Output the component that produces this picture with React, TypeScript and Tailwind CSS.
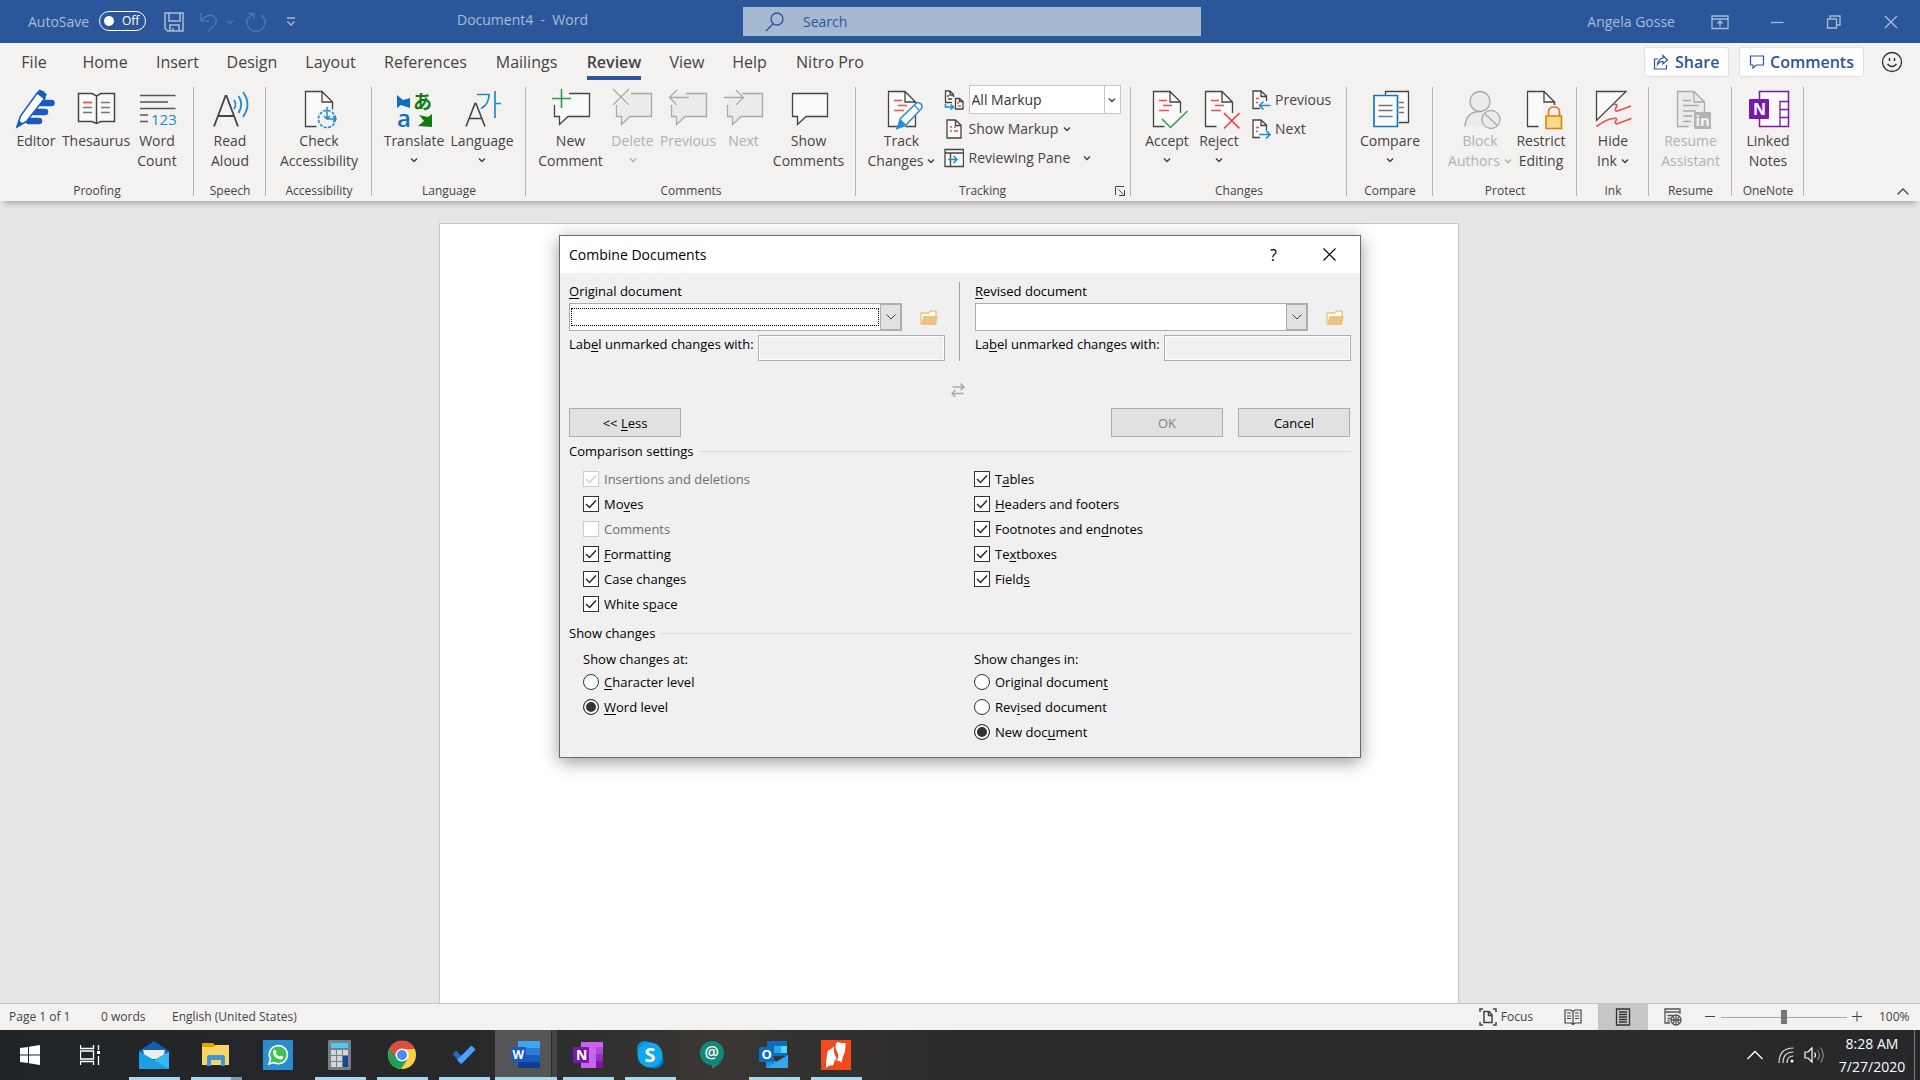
import { useState } from "react";
import type { ReactNode } from "react";

const DARK = "#444444";
const GRAY = "#a9a9a9";
const BLUE = "#1e8bcd";
const RED = "#f04e4e";

function Chevron({ className = "" }: { className?: string }) {
  return (
    <svg className={`h-[6px] w-[8px] shrink-0 ${className}`} viewBox="0 0 8 6" fill="none" stroke="currentColor" strokeWidth={1.5}>
      <path d="M1 1.5 4 4.5 7 1.5" />
    </svg>
  );
}

function Glyph({ children }: { children: ReactNode }) {
  return (
    <svg className="h-10 w-10 shrink-0 overflow-visible" viewBox="0 0 40 40" fill="none" strokeWidth={1.3}>
      {children}
    </svg>
  );
}

function Sheet({ stroke = DARK, fill = "#fafafa" }: { stroke?: string; fill?: string }) {
  return (
    <>
      <path d="M6.5 3.5H23L33.5 14v24.5h-27z" fill={fill} />
      <path d="M33.5 25V14L23 3.5H6.5v35h11M23 3.5V14h10.5" stroke={stroke} />
    </>
  );
}

const RedLines = () => <path d="M12 12.5h8M16 17.5h9M12 22.5h10" stroke={RED} strokeWidth={1.6} />;

function Bubble({ stroke = DARK, fill = "#fafafa", notch = false }: { stroke?: string; fill?: string; notch?: boolean }) {
  return (
    <>
      <path d="M3.5 5.5h35v23H17l-8.500 8v-8h-5z" fill={fill} />
      <path
        d={notch ? "M18 5.5h20.5v23H17l-8.500 8v-8h-5V17" : "M3.5 5.5h35v23H17l-8.500 8v-8h-5z"}
        stroke={stroke}
      />
    </>
  );
}

const EditorIcon = () => (
  <Glyph>
    <path d="M22 15h13.500M18 24h11M13 33h10" stroke="#185abd" strokeWidth={6.500} strokeLinecap="round" />
    <path d="M1 39 4.500 28 21.500 4.500l7.500 5.500L10.500 33.500z" fill="#fff" stroke="#185abd" strokeWidth={1.6} />
    <path d="m20.500 5.500 3-4q4 1 7.500 5l-3 4.500z" fill="#185abd" />
    <path d="m.5 39.500 2.500-7.500 4 4z" fill="#185abd" />
  </Glyph>
);

const ThesaurusIcon = () => (
  <Glyph>
    <path d="M2.500 5.500H16l4.500 2.500L25 5.500h13.500v28H25l-4.500 2-4.500-2H2.500z" fill="#fafafa" stroke={DARK} strokeWidth={1.500} />
    <path d="M20.500 8v27" stroke={DARK} strokeWidth={1.500} />
    <path d="M7 14.500h9" stroke={RED} strokeWidth={1.800} />
    <path d="M7 19.500h9M7 24.500h9M25 14.500h9M25 19.500h9M25 24.500h9" stroke="#777" />
  </Glyph>
);

const WordCountIcon = () => (
  <Glyph>
    <path d="M3 7.500h35.500M3 14h28M3 20.500h35.500M3 27h8M3 33.500h8" stroke="#555" strokeWidth={1.500} />
    <text x="14" y="36.500" fontSize="15" fill={BLUE}>123</text>
  </Glyph>
);

const ReadAloudIcon = () => (
  <Glyph>
    <path d="M4 38.500 15.500 8h1L28 38.500M8 28h16" stroke={DARK} strokeWidth={1.800} />
    <path d="M24 12q3 4.500 0 9M28.500 8q5.500 8 0 17M33 4q9 12 0 25" stroke={BLUE} strokeWidth={1.800} />
  </Glyph>
);

const CheckIcon = () => (
  <Glyph>
    <Sheet />
    <circle cx="28" cy="31" r="11" fill="#f3f2f1" />
    <path d="M28 19v12h9m-3-3 3 3-3 3M25 28l3 3 3-3" stroke={BLUE} strokeWidth={1.500} />
    <circle cx="28" cy="31" r="8.500" stroke={BLUE} strokeWidth={1.600} strokeDasharray="3 1.500" />
  </Glyph>
);

const TranslateIcon = () => (
  <Glyph>
    <path d="M3 7v13l4-3 9 3V10l-7 2z" fill="#106ebe" />
    <path d="M38 26v13l-14-1 6-5-5-6 9 2z" fill="#107c10" />
    <text x="3" y="39" fontSize="24" fontWeight="600" fill="#106ebe">a</text>
    <text x="19" y="21" fontSize="19" fontWeight="700" fill="#107c10" fontFamily="'Noto Sans CJK JP', sans-serif">あ</text>
  </Glyph>
);

const LanguageIcon = () => (
  <Glyph>
    <path d="M4 38.500 13 15.500h1l9 23M7.500 30.500h12" stroke={DARK} strokeWidth={1.600} />
    <path d="M15 6.500h12q0 10-8 14M33 3v27M33 15.500h6" stroke={BLUE} strokeWidth={1.700} />
  </Glyph>
);

const NewCommentIcon = () => (
  <Glyph>
    <Bubble notch />
    <path d="M10.500 1v19M1 10.500h19" stroke="#f3f2f1" strokeWidth={5} />
    <path d="M10.500 1v19M1 10.500h19" stroke="#2e9e4f" strokeWidth={1.600} />
  </Glyph>
);

const DeleteIcon = () => (
  <Glyph>
    <Bubble notch stroke={GRAY} fill="#ebebeb" />
    <path d="m0 1 16 16M16 1 0 17" stroke="#f3f2f1" strokeWidth={4} />
    <path d="m0 1 16 16M16 1 0 17" stroke={GRAY} />
  </Glyph>
);

const PreviousIcon = () => (
  <Glyph>
    <Bubble notch stroke={GRAY} fill="#ebebeb" />
    <path d="M9 2 1.500 9.500 9 17M2 9.500h19" stroke="#f3f2f1" strokeWidth={4} />
    <path d="M9 2 1.500 9.500 9 17M2 9.500h19" stroke={GRAY} />
  </Glyph>
);

const NextIcon = () => (
  <Glyph>
    <Bubble notch stroke={GRAY} fill="#ebebeb" />
    <path d="m12 2 7.500 7.500L12 17M19 9.500H0" stroke="#f3f2f1" strokeWidth={4} />
    <path d="m12 2 7.500 7.500L12 17M19 9.500H0" stroke={GRAY} />
  </Glyph>
);

const ShowCommentsIcon = () => (
  <Glyph>
    <Bubble />
  </Glyph>
);

const TrackChangesIcon = () => (
  <Glyph>
    <Sheet />
    <RedLines />
    <path d="M33.500 26v12.500h-10" stroke={DARK} />
    <path d="m15.500 40 3-9.500L35 14.500q5.500 0 5 5.500L23.500 37.500z" fill="#fff" stroke="#2b8fd6" strokeWidth={1.500} />
    <path d="m15 40.500 3.500-8.500 5 5zM32.500 17.500l4.500 4.500" fill="#2b8fd6" stroke="#2b8fd6" />
  </Glyph>
);

const AcceptIcon = () => (
  <Glyph>
    <Sheet />
    <RedLines />
    <path d="m15 31 8.500 8.500L40.500 23" stroke="#f3f2f1" strokeWidth={5} />
    <path d="m15 31 8.500 8.500L40.500 23" stroke="#2e9e4f" strokeWidth={1.500} />
  </Glyph>
);

const RejectIcon = () => (
  <Glyph>
    <Sheet />
    <RedLines />
    <path d="m25 25 15.500 15.500m0-15.500L25 40.500" stroke="#f3f2f1" strokeWidth={5} />
    <path d="m25 25 15.500 15.500m0-15.500L25 40.500" stroke="#f03a3a" strokeWidth={1.500} />
  </Glyph>
);

const CompareIcon = () => (
  <Glyph>
    <path d="M15.500 7V3.500h23v31H29" fill="#fafafa" stroke={DARK} />
    <path d="M29 14.500h5M29 19.500h5M29 24.500h5" stroke="#777" />
    <path d="M4 7.500h23.500v31H4z" fill="#fafafa" stroke="#1a74c4" strokeWidth={1.700} />
    <path d="M8.500 17.500h14M8.500 22.500h14M8.500 28.500h14" stroke="#777" />
  </Glyph>
);

const BlockIcon = () => (
  <Glyph>
    <path d="M5 38.500q1-15 15-15 7 0 10 5v10z" fill="#ebebeb" />
    <path d="M5 38.500q1-15 15-15" stroke={GRAY} />
    <circle cx="20" cy="13.500" r="10" fill="#ebebeb" stroke={GRAY} />
    <circle cx="31" cy="31.500" r="9" fill="#ebebeb" stroke={GRAY} />
    <path d="m24.500 25.500 13 12" stroke={GRAY} />
  </Glyph>
);

const RestrictIcon = () => (
  <Glyph>
    <Sheet />
    <path d="M22 17h20v25H22z" fill="#f3f2f1" />
    <path d="M33.500 17v-3" stroke={DARK} />
    <path d="M27.500 28v-4q0-5 5.500-5t5.500 5v4" stroke="#e07b10" strokeWidth={1.700} />
    <path d="M25 28h15.500v12.500H25z" fill="#fbd98a" stroke="#e07b10" strokeWidth={1.500} />
  </Glyph>
);

const HideInkIcon = () => (
  <Glyph>
    <path d="M3.500 3.500H33l-29.500 29z" fill="#fafafa" stroke={DARK} />
    <path d="M20 16.500q6-1 3 3-2 5 3 3l12-4.500M3.500 38.500q11-8 17-8 5-1 2 3-1 4 5 1l11-4" stroke={RED} strokeWidth={1.700} />
  </Glyph>
);

const ResumeIcon = () => (
  <Glyph>
    <Sheet stroke={GRAY} fill="#ebebeb" />
    <path d="M12 12.500h8M12 17.500h16M12 23h13M12 28h9M12 33.500h8" stroke={GRAY} />
    <rect x="23" y="24" width="17" height="17" rx="1" fill="#b3b3b3" />
    <text x="24.500" y="38" fontSize="15" fontWeight="700" fill="#f3f2f1">in</text>
  </Glyph>
);

const LinkedNotesIcon = () => (
  <Glyph>
    <path d="M11.500 3.500h29v35h-29z" fill="#fafafa" stroke="#7719aa" strokeWidth={1.500} />
    <path d="M32 38.500v-25h8.500M32 21.500h8.500M32 29.500h8.500" stroke="#7719aa" />
    <rect x="1" y="11" width="20" height="20" rx="1" fill="#7719aa" />
    <text x="5" y="27" fontSize="16" fontWeight="700" fill="#fff">N</text>
  </Glyph>
);

type RibbonButtonProps = {
  icon: ReactNode;
  lines: string[];
  width: string;
  arrow?: "below" | "inline";
  disabled?: boolean;
};

function RibbonButton({ icon, lines, width, arrow, disabled }: RibbonButtonProps) {
  return (
    <button
      type="button"
      disabled={disabled}
      className={`flex shrink-0 flex-col items-center pt-[3px] text-[14px] leading-5 whitespace-nowrap ${width} ${
        disabled ? "text-[#b1b0af]" : "text-[#444444]"
      }`}
    >
      {icon}
      <span className="mt-[3px] flex flex-col items-center">
        {lines.map((line, i) => (
          <span key={line} className="flex items-center gap-1">
            {line}
            {arrow === "inline" && i === lines.length - 1 && <Chevron />}
          </span>
        ))}
        {arrow === "below" && <Chevron className="mt-[6px]" />}
      </span>
    </button>
  );
}

function Group({ label, width, children, launcher }: { label: string; width: string; children: ReactNode; launcher?: boolean }) {
  return (
    <section className={`relative flex shrink-0 flex-col ${width}`}>
      <div className="flex flex-1 items-start justify-center">{children}</div>
      <h2 className={`text-center text-[12px] leading-[10px] ${launcher ? "pr-[22px]" : ""}`}>{label}</h2>
      {launcher && (
        <button type="button" aria-label="Change tracking options" className="absolute right-[6px] bottom-0">
          <svg className="h-[10px] w-[10px]" viewBox="0 0 10 10" fill="none" stroke={DARK}>
            <path d="M.5 9V.5H9M3.500 3.500l5 5M9.500 4v5.500H4" />
          </svg>
        </button>
      )}
      <span className="absolute top-[2px] right-0 bottom-0 w-px bg-[#b5b3b1]" />
    </section>
  );
}

function SmallSheet({ kind }: { kind: "all" | "show" | "pane" | "prev" | "next" }) {
  return (
    <svg className="h-5 w-5 shrink-0" viewBox="0 0 20 20" fill="none" stroke={DARK} strokeWidth={1.300}>
      {kind === "all" && (
        <>
          <path d="M8 12.500H1.500V1H6l3.500 3.500V7M6 1v4h3.500" fill="#fafafa" />
          <path d="M11.500 8.500h4l3.500 3v7.500h-7.500zM15.500 8.500v3H19" fill="#fafafa" />
          <path d="M3 6h2M4 9h4" />
          <path d="M13 13h2M14 16h3" stroke={RED} />
          <path d="M1.500 14v3H9M6.500 14.500l3 2.500-3 2.500" stroke={BLUE} strokeWidth={1.600} />
        </>
      )}
      {kind === "show" && (
        <>
          <path d="M3 1h8.500L17 6v13H3zM11.500 1v5.500H17" fill="#fafafa" />
          <path d="M6 8h2M10 8h2M6 12h2M10 12h4" stroke={RED} strokeWidth={1.500} />
        </>
      )}
      {kind === "pane" && (
        <>
          <path d="M1 1.500h18.500v17H1zM1 5h18.500M6.500 5v13.500" fill="#fafafa" />
          <path d="M4 11.500h9M9.500 8l3.500 3.500L9.500 15" stroke={BLUE} strokeWidth={1.600} />
        </>
      )}
      {(kind === "prev" || kind === "next") && (
        <>
          <path d="M9 18.500H2V1h8l5.500 5v5M10 1v5.500h5.500" fill="#fafafa" />
          <path d="M5 8.500h3M5 12.500h2" stroke={RED} strokeWidth={1.500} />
          {kind === "prev" ? (
            <path d="M19.500 15.500H8.500m4-4-4 4 4 4" stroke={BLUE} strokeWidth={1.600} />
          ) : (
            <path d="M8 15.500h11m-4-4 4 4-4 4" stroke={BLUE} strokeWidth={1.600} />
          )}
        </>
      )}
    </svg>
  );
}

function TitleBar() {
  return (
    <header className="flex h-[43px] shrink-0 items-center bg-[#2b579a] text-[14px] text-[#a9bcd8]">
      <div className="flex w-[38.7%] shrink-0 items-center pl-7">
        <span className="w-[64px] pb-px whitespace-nowrap">AutoSave</span>
        <button
          type="button"
          role="switch"
          aria-checked="false"
          aria-label="AutoSave"
          className="mb-[2px] ml-[7px] flex h-5 w-[47px] items-center gap-2 rounded-full border border-white pl-1 text-[12px] text-white"
        >
          <span className="h-[10px] w-[10px] rounded-full bg-white" />
          Off
        </button>
        <button type="button" aria-label="Save" className="ml-[18px]">
          <svg className="h-5 w-5" viewBox="0 0 20 20" fill="none" stroke="currentColor" strokeWidth={1.500}>
            <path d="M1 1h18v18H3.500L1 16.500zM5 1v8h11V1M6 19v-6h9v6M9 19v-3" />
          </svg>
        </button>
        <button type="button" aria-label="Undo" className="ml-4 flex items-center gap-[6px] text-[#4d74b0]">
          <svg className="h-5 w-5" viewBox="0 0 20 20" fill="none" stroke="currentColor" strokeWidth={1.600}>
            <path d="M1 1v8h8M1.500 8.500Q8 1 14 4.500q5 5-1 10l-5 5" />
          </svg>
          <Chevron />
        </button>
        <button type="button" aria-label="Redo" className="ml-3 text-[#4d74b0]">
          <svg className="h-5 w-5" viewBox="0 0 20 20" fill="none" stroke="currentColor" strokeWidth={1.600}>
            <path d="M2 1.500h6v6M7.500 2Q1 5 1 10.500 2 19 10 19.500q8-.5 9-9Q19 6 15 3" />
          </svg>
        </button>
        <button type="button" aria-label="Customize Quick Access Toolbar" className="ml-5">
          <svg className="h-[10px] w-[10px]" viewBox="0 0 10 10" fill="none" stroke="currentColor" strokeWidth={1.300}>
            <path d="M1 1h8M1.500 4.500 5 8l3.500-3.500" />
          </svg>
        </button>
        <span className="ml-[161px] pb-1 whitespace-pre">Document4  -  Word</span>
      </div>
      <label className="flex h-[29px] w-[458px] shrink-0 items-center bg-[#a5b9d3] pl-[22px] text-[#2b579a]">
        <svg className="h-5 w-5" viewBox="0 0 20 20" fill="none" stroke="currentColor" strokeWidth={1.400}>
          <circle cx="12" cy="7" r="6" />
          <path d="M8 12 1 19" />
        </svg>
        <input
          type="search"
          aria-label="Search"
          placeholder="Search"
          className="ml-[18px] flex-1 bg-transparent outline-none placeholder:text-[#2b579a]"
        />
      </label>
      <div className="flex flex-1 items-center justify-end pr-5">
        <span className="mr-[36px]">Angela Gosse</span>
        <div className="flex items-center gap-[39px]">
          <button type="button" aria-label="Ribbon Display Options">
            <svg className="h-[18px] w-[18px]" viewBox="0 0 18 18" fill="none" stroke="currentColor" strokeWidth={1.300}>
              <path d="M1 3h16v12.500H1zM1 6h16M9 13.500V8M6.500 10.500 9 8l2.500 2.500" />
            </svg>
          </button>
          <button type="button" aria-label="Minimize">
            <svg className="h-[18px] w-[18px]" viewBox="0 0 18 18" stroke="currentColor" strokeWidth={1.300}>
              <path d="M3 9.500h12.500" />
            </svg>
          </button>
          <button type="button" aria-label="Restore Down">
            <svg className="h-[18px] w-[18px]" viewBox="0 0 18 18" fill="none" stroke="currentColor" strokeWidth={1.300}>
              <path d="M2.500 6h9v9h-9zM5 6V3h10v9h-3.500" />
            </svg>
          </button>
          <button type="button" aria-label="Close">
            <svg className="h-[18px] w-[18px]" viewBox="0 0 18 18" stroke="currentColor" strokeWidth={1.300}>
              <path d="m3 3 12 12M15 3 3 15" />
            </svg>
          </button>
        </div>
      </div>
    </header>
  );
}

const TABS = [
  { name: "File", width: "w-[68px]" },
  { name: "Home", width: "w-[74px]" },
  { name: "Insert", width: "w-[71px]" },
  { name: "Design", width: "w-[78px]" },
  { name: "Layout", width: "w-[79px]" },
  { name: "References", width: "w-[111px]" },
  { name: "Mailings", width: "w-[91px]" },
  { name: "Review", width: "w-[84px]" },
  { name: "View", width: "w-[62px]" },
  { name: "Help", width: "w-[63px]" },
  { name: "Nitro Pro", width: "w-[98px]" },
];

function TabRow() {
  return (
    <div className="flex h-[42px] shrink-0 justify-between">
      <nav className="flex" role="tablist">
        {TABS.map((t) => (
          <button
            key={t.name}
            type="button"
            role="tab"
            aria-selected={t.name === "Review"}
            className={`flex flex-col items-center pt-2 text-[16px] leading-[22px] whitespace-nowrap ${t.width}`}
          >
            {t.name === "Review" ? (
              <span className="border-b-4 border-[#2b579a] pb-[3px] font-semibold">{t.name}</span>
            ) : (
              t.name
            )}
          </button>
        ))}
      </nav>
      <div className="flex items-start pt-1 pr-[17px] text-[16px] font-semibold text-[#2b579a]">
        <button type="button" className="flex h-[30px] w-[85px] items-center gap-[6px] rounded-[3px] border border-[#e1dfdd] bg-white pl-2">
          <svg className="h-4 w-4" viewBox="0 0 16 16" fill="none" stroke="currentColor" strokeWidth={1.200}>
            <path d="M5 5H1.500v10h12v-4M10 1.500 14.500 6 10 10V7.500Q7 7 4.500 10.500 5 5 10 4z" />
          </svg>
          Share
        </button>
        <button type="button" className="ml-[10px] flex h-[30px] w-[125px] items-center gap-[5px] rounded-[3px] border border-[#e1dfdd] bg-white pl-[9px]">
          <svg className="h-4 w-4 shrink-0" viewBox="0 0 16 16" fill="none" stroke="currentColor" strokeWidth={1.200}>
            <path d="M1.500 2h13v9H7.500L4 14v-3H1.500z" />
          </svg>
          Comments
        </button>
        <button type="button" aria-label="Feedback" className="mt-1 ml-[17px]">
          <svg className="h-[22px] w-[22px]" viewBox="0 0 22 22" fill="none" stroke="#333" strokeWidth={1.300}>
            <circle cx="11" cy="11" r="9.500" />
            <path d="M6.500 13q4.500 5 9 0M8.500 7v3M13.500 7v3" strokeWidth={1.500} />
          </svg>
        </button>
      </div>
    </div>
  );
}

function Ribbon() {
  return (
    <div className="z-10 flex h-[116px] shrink-0 pb-[5px] text-[#444444] shadow-[0_6px_6px_-4px_rgba(0,0,0,0.3)]">
      <Group label="Proofing" width="w-[194px]">
        <RibbonButton icon={<EditorIcon />} lines={["Editor"]} width="w-[50px]" />
        <RibbonButton icon={<ThesaurusIcon />} lines={["Thesaurus"]} width="w-[70px]" />
        <RibbonButton icon={<WordCountIcon />} lines={["Word", "Count"]} width="w-[52px]" />
      </Group>
      <Group label="Speech" width="w-[72px]">
        <RibbonButton icon={<ReadAloudIcon />} lines={["Read", "Aloud"]} width="w-[60px]" />
      </Group>
      <Group label="Accessibility" width="w-[106px]">
        <RibbonButton icon={<CheckIcon />} lines={["Check", "Accessibility"]} width="w-[90px]" />
      </Group>
      <Group label="Language" width="w-[154px]">
        <RibbonButton icon={<TranslateIcon />} lines={["Translate"]} width="w-[66px]" arrow="below" />
        <RibbonButton icon={<LanguageIcon />} lines={["Language"]} width="w-[70px]" arrow="below" />
      </Group>
      <Group label="Comments" width="w-[330px]">
        <RibbonButton icon={<NewCommentIcon />} lines={["New", "Comment"]} width="w-[68px]" />
        <RibbonButton icon={<DeleteIcon />} lines={["Delete"]} width="w-[56px]" arrow="below" disabled />
        <RibbonButton icon={<PreviousIcon />} lines={["Previous"]} width="w-[55px]" disabled />
        <RibbonButton icon={<NextIcon />} lines={["Next"]} width="w-[56px]" disabled />
        <RibbonButton icon={<ShowCommentsIcon />} lines={["Show", "Comments"]} width="w-[74px]" />
      </Group>
      <Group label="Tracking" width="w-[275px]" launcher>
        <RibbonButton icon={<TrackChangesIcon />} lines={["Track", "Changes"]} width="w-[70px]" arrow="inline" />
        <div className="ml-[7px] flex flex-col text-[14px] whitespace-nowrap">
          <label className="flex h-[29px] items-center gap-[5px]">
            <SmallSheet kind="all" />
            <span className="relative flex h-[29px] w-[152px] bg-white">
              <select aria-label="Display for Review" className="w-full appearance-none border border-[#c8c6c4] pl-[2px] text-[#333] outline-none">
                <option>All Markup</option>
              </select>
              <span className="pointer-events-none absolute inset-y-px right-px flex w-[16px] items-center justify-center border-l border-[#c8c6c4]">
                <Chevron />
              </span>
            </span>
          </label>
          <button type="button" className="flex h-[29px] items-center gap-[5px]">
            <SmallSheet kind="show" />
            Show Markup
            <Chevron />
          </button>
          <button type="button" className="flex h-[29px] items-center gap-[5px]">
            <SmallSheet kind="pane" />
            Reviewing Pane
            <Chevron className="ml-2" />
          </button>
        </div>
      </Group>
      <Group label="Changes" width="w-[216px]">
        <RibbonButton icon={<AcceptIcon />} lines={["Accept"]} width="w-[52px]" arrow="below" />
        <RibbonButton icon={<RejectIcon />} lines={["Reject"]} width="w-[52px]" arrow="below" />
        <div className="ml-[6px] flex w-[86px] flex-col text-[14px]">
          <button type="button" className="flex h-[29px] items-center gap-1">
            <SmallSheet kind="prev" />
            Previous
          </button>
          <button type="button" className="flex h-[29px] items-center gap-1">
            <SmallSheet kind="next" />
            Next
          </button>
        </div>
      </Group>
      <Group label="Compare" width="w-[86px]">
        <RibbonButton icon={<CompareIcon />} lines={["Compare"]} width="w-[70px]" arrow="below" />
      </Group>
      <Group label="Protect" width="w-[144px]">
        <RibbonButton icon={<BlockIcon />} lines={["Block", "Authors"]} width="w-[72px]" arrow="inline" disabled />
        <RibbonButton icon={<RestrictIcon />} lines={["Restrict", "Editing"]} width="w-[50px]" />
      </Group>
      <Group label="Ink" width="w-[72px]">
        <RibbonButton icon={<HideInkIcon />} lines={["Hide", "Ink"]} width="w-[60px]" arrow="inline" />
      </Group>
      <Group label="Resume" width="w-[83px]">
        <RibbonButton icon={<ResumeIcon />} lines={["Resume", "Assistant"]} width="w-[70px]" disabled />
      </Group>
      <Group label="OneNote" width="w-[72px]">
        <RibbonButton icon={<LinkedNotesIcon />} lines={["Linked", "Notes"]} width="w-[60px]" />
      </Group>
      <div className="flex flex-1 items-end justify-end pr-[11px]">
        <button type="button" aria-label="Collapse the Ribbon">
          <svg className="h-[8px] w-3" viewBox="0 0 12 8" fill="none" stroke={DARK} strokeWidth={1.300}>
            <path d="M.5 6.500 6 1l5.500 5.500" />
          </svg>
        </button>
      </div>
    </div>
  );
}

// "_" precedes the letter that is the access key
function Key({ text }: { text: string }) {
  const i = text.indexOf("_");
  if (i < 0) return <>{text}</>;
  return (
    <>
      {text.slice(0, i)}
      <span className="underline underline-offset-2">{text[i + 1]}</span>
      {text.slice(i + 2)}
    </>
  );
}

function DocumentPicker({ id, title, label, focused }: { id: string; title: string; label: string; focused?: boolean }) {
  return (
    <div className="flex w-[376px] flex-col">
      <label htmlFor={id} className="leading-[18px]">
        <Key text={title} />
      </label>
      <div className="mt-[3px] flex items-center">
        <div className="relative h-7 w-[333px] border border-[#abadb3] bg-white">
          <select id={id} className="h-full w-full appearance-none outline-none" />
          {focused && (
            <span className="pointer-events-none absolute top-1 right-[22px] bottom-1 left-px border border-dotted border-black" />
          )}
          <span className="pointer-events-none absolute inset-y-0 right-0 flex w-[21px] items-center justify-center border border-[#abadb3] bg-[#e1e1e1]">
            <svg className="h-[6px] w-[10px]" viewBox="0 0 10 6" fill="none" stroke="#444">
              <path d="M.5.5 5 5 9.500.5" />
            </svg>
          </span>
        </div>
        <button type="button" aria-label="Browse" className="ml-[18px]">
          <svg className="h-[15px] w-[18px]" viewBox="0 0 18 15">
            <path d="M1 14V3h8l1.500-2H16v6" fill="#fff" stroke="#eac282" strokeWidth={1.300} />
            <path d="M3.500 6H18l-2 9H1z" fill="#eac282" />
          </svg>
        </button>
      </div>
      <div className="mt-1 flex justify-between">
        <label htmlFor={`${id}-label`} className="leading-[18px] whitespace-nowrap">
          <Key text={label} />
        </label>
        <input
          id={`${id}-label`}
          type="text"
          disabled
          className="h-[26px] w-[187px] border border-[#abadb3] bg-[#f0f0f0] shadow-[inset_0_0_0_1px_#fff]"
        />
      </div>
    </div>
  );
}

function Check({ text, checked = false, disabled = false }: { text: string; checked?: boolean; disabled?: boolean }) {
  return (
    <label className={`flex h-[25px] items-center gap-[5px] ${disabled ? "text-[#6d6d6d]" : ""}`}>
      <span className="relative flex h-4 w-4">
        <input
          type="checkbox"
          defaultChecked={checked}
          disabled={disabled}
          className="peer h-4 w-4 appearance-none border border-[#333] bg-white disabled:border-[#ccc]"
        />
        <svg
          className="pointer-events-none absolute inset-0 hidden h-4 w-4 text-[#222] peer-checked:block peer-disabled:text-[#ccc]"
          viewBox="0 0 16 16"
          fill="none"
          stroke="currentColor"
          strokeWidth={1.400}
        >
          <path d="m3 8 3.500 3.500L13 4.500" />
        </svg>
      </span>
      <span className="pt-[2px]">
        <Key text={text} />
      </span>
    </label>
  );
}

function Radio({ name, text, checked, onPick }: { name: string; text: string; checked: boolean; onPick: () => void }) {
  return (
    <label className="flex h-[25px] items-center gap-[5px]">
      <input
        type="radio"
        name={name}
        checked={checked}
        onChange={onPick}
        className="h-4 w-4 appearance-none rounded-full border border-[#333] bg-white checked:bg-[#333] checked:shadow-[inset_0_0_0_2px_#fff]"
      />
      <span className="pt-[2px]">
        <Key text={text} />
      </span>
    </label>
  );
}

const SectionTitle = ({ children }: { children: ReactNode }) => (
  <h3 className="flex items-center gap-[5px] leading-[18px]">
    {children}
    <span className="h-px flex-1 bg-[#dcdcdc]" />
  </h3>
);

function CombineDialog() {
  const [level, setLevel] = useState("_Word level");
  const [target, setTarget] = useState("New doc_ument");
  const button = "h-[29px] w-[112px] border border-[#adadad] bg-[#e1e1e1] pt-[2px] disabled:text-[#838383]";

  return (
    <div
      role="dialog"
      aria-labelledby="combine-title"
      className="flex h-[523px] w-[802px] flex-col border border-[#6b6b6b] bg-[#f0f0f0] text-[13px] text-black shadow-[0_4px_16px_rgba(0,0,0,0.4)]"
    >
      <div className="flex h-[37px] shrink-0 items-center bg-white pr-6 pl-[9px]">
        <h2 id="combine-title" className="flex-1 text-[14px]">Combine Documents</h2>
        <button type="button" aria-label="Help" className="mr-[46px] text-[16px]">?</button>
        <button type="button" aria-label="Close">
          <svg className="h-[13px] w-[13px]" viewBox="0 0 13 13" stroke="#000" strokeWidth={1.200}>
            <path d="m.5.5 12 12M12.500.5l-12 12" />
          </svg>
        </button>
      </div>
      <div className="flex flex-col px-[9px] pt-[9px]">
        <div className="flex">
          <DocumentPicker id="original" title="_Original document" label="Lab_el unmarked changes with:" focused />
          <span className="mr-[15px] ml-[14px] w-px bg-[#a0a0a0]" />
          <DocumentPicker id="revised" title="_Revised document" label="La_bel unmarked changes with:" />
        </div>
        <button type="button" aria-label="Swap documents" disabled className="mt-[22px] mr-[5px] self-center">
          <svg className="h-[14px] w-[14px]" viewBox="0 0 14 14" fill="none" stroke="#a8a8a8" strokeWidth={1.500}>
            <path d="M1.500 4H13M9.500.5 13 4 9.500 7M12.500 10.500H1M4.500 7 1 10.500 4.500 14" />
          </svg>
        </button>
        <div className="mt-[11px] flex pr-px">
          <button type="button" className={button}>
            <Key text="<< _Less" />
          </button>
          <span className="flex-1" />
          <button type="button" disabled className={button}>OK</button>
          <button type="button" className={`${button} ml-[15px]`}>Cancel</button>
        </div>
        <div className="mt-[5px]">
          <SectionTitle>Comparison settings</SectionTitle>
        </div>
        <div className="mt-[6px] flex pl-[14px]">
          <div className="w-[391px]">
            <Check text="Insertions and deletions" checked disabled />
            <Check text="Mo_ves" checked />
            <Check text="Comments" disabled />
            <Check text="_Formatting" checked />
            <Check text="Case chan_ges" checked />
            <Check text="White s_pace" checked />
          </div>
          <div>
            <Check text="T_ables" checked />
            <Check text="_Headers and footers" checked />
            <Check text="Footnotes and en_dnotes" checked />
            <Check text="Te_xtboxes" checked />
            <Check text="Field_s" checked />
          </div>
        </div>
        <div className="mt-[8px]">
          <SectionTitle>Show changes</SectionTitle>
        </div>
        <div className="mt-[8px] flex pl-[14px]">
          <fieldset className="w-[391px]">
            <legend className="pb-px leading-[18px]">Show changes at:</legend>
            {["_Character level", "_Word level"].map((t) => (
              <Radio key={t} name="level" text={t} checked={level === t} onPick={() => setLevel(t)} />
            ))}
          </fieldset>
          <fieldset>
            <legend className="pb-px leading-[18px]">Show changes in:</legend>
            {["Original documen_t", "Rev_ised document", "New doc_ument"].map((t) => (
              <Radio key={t} name="target" text={t} checked={target === t} onPick={() => setTarget(t)} />
            ))}
          </fieldset>
        </div>
      </div>
    </div>
  );
}

function StatusBar() {
  return (
    <footer className="flex h-[27px] shrink-0 items-center border-t border-[#c6c6c6] bg-[#f3f2f1] pr-[9px] pl-[9px] text-[12px] whitespace-nowrap text-[#444444]">
      <span className="w-[92px]">Page 1 of 1</span>
      <span className="w-[71px]">0 words</span>
      <span className="flex-1">English (United States)</span>
      <button type="button" className="flex items-center gap-1">
        <svg className="h-[18px] w-[18px]" viewBox="0 0 18 18" fill="none" stroke={DARK} strokeWidth={1.500}>
          <path d="M4 1H1v3M14 1h3v3M4 17H1v-3M14 17h3v-3M5 3.500h5l3 3.500v7.500H5zM9.500 3.500v4H13" />
        </svg>
        Focus
      </button>
      <button type="button" aria-label="Read Mode" className="ml-[31px]">
        <svg className="h-[18px] w-[18px]" viewBox="0 0 18 18" fill="none" stroke={DARK} strokeWidth={1.200}>
          <path d="M1 2h6l2 1.500L11 2h6v13h-6l-2 1.500L7 15H1zM9 3.500V17M3 5h4M3 8h4M3 10.500h4M11 5h4M11 8h4M11 10.500h4" />
        </svg>
      </button>
      <button type="button" aria-label="Print Layout" className="ml-4 flex h-[26px] w-[50px] items-center justify-center bg-[#c8c6c4]">
        <svg className="h-[18px] w-4" viewBox="0 0 16 18" fill="none" stroke="#333" strokeWidth={1.300}>
          <path d="M1.500 1h13v16h-13zM4 4h8M4 6.500h8M4 9h8M4 11.500h8M4 14h8" />
        </svg>
      </button>
      <button type="button" aria-label="Web Layout" className="ml-4">
        <svg className="h-[18px] w-[18px]" viewBox="0 0 18 18" fill="none" stroke="#555" strokeWidth={1.300}>
          <path d="M6 15H1V1h15v5M1 4h15M3.500 7.500h6M3.500 10.500h3M3.500 13h2" />
          <circle cx="12" cy="12" r="5" fill="#f3f2f1" />
          <path d="M7 12h10M12 7v10M9 8.500q2.500 3.500 0 7M15 8.500q-2.500 3.500 0 7" />
        </svg>
      </button>
      <button type="button" aria-label="Zoom out" className="ml-[23px]">
        <svg className="h-3 w-[11px]" viewBox="0 0 11 12" stroke={DARK}>
          <path d="M0 5.500h10" />
        </svg>
      </button>
      <input
        type="range"
        aria-label="Zoom"
        defaultValue={50}
        className="mx-[5px] h-[14px] w-[126px] appearance-none bg-transparent bg-[linear-gradient(#a8a8a8,#a8a8a8)] bg-[length:100%_1px] bg-center bg-no-repeat [&::-webkit-slider-thumb]:h-[14px] [&::-webkit-slider-thumb]:w-[6px] [&::-webkit-slider-thumb]:appearance-none [&::-webkit-slider-thumb]:bg-[#777]"
      />
      <button type="button" aria-label="Zoom in">
        <svg className="h-3 w-[11px]" viewBox="0 0 11 12" stroke={DARK}>
          <path d="M0 5.500h10M5 .5v10" />
        </svg>
      </button>
      <span className="ml-4 w-8">100%</span>
    </footer>
  );
}

function AppIcon({ children }: { children: ReactNode }) {
  return (
    <svg className="h-8 w-8" viewBox="0 0 32 32" fill="none">
      {children}
    </svg>
  );
}

const APPS: { name: string; state: "running" | "active" | "stacked" | "pinned"; icon: ReactNode }[] = [
  {
    name: "Mail",
    state: "running",
    icon: (
      <AppIcon>
        <path d="M1 11 16 1l15 10v3H1z" fill="#0f5fb4" />
        <path d="M5 10h22l-2 9H7z" fill="#eee" />
        <path d="M1 11.500 16 20l15-8.500V29H1z" fill="#32b8f0" />
        <path d="m1 11.500 30 17.500H1z" fill="#1c9ee4" />
      </AppIcon>
    ),
  },
  {
    name: "File Explorer",
    state: "stacked",
    icon: (
      <AppIcon>
        <path d="M2 4q0-1 1-1h10l3 3v4H2z" fill="#e5a100" />
        <path d="M2 7h11l3-2h13v20H2z" fill="#fcd462" />
        <path d="M7 26V17q0-2 2-2h14q2 0 2 2v9h-4v-6H11v6z" fill="#3d97d8" />
      </AppIcon>
    ),
  },
  {
    name: "WhatsApp",
    state: "pinned",
    icon: (
      <AppIcon>
        <path d="M1 0h30v30H1z" fill="#2a8dd0" />
        <path d="m7 24 1.500-5A9 9 0 1 1 12 22.500z" fill="#39c351" stroke="#fff" strokeWidth={1.600} />
        <path d="M12 10q2-1 2.500 2l-.5 1.500q1 2 3.500 3l1.500-1 2.500 1.500q0 3-3 2.500-6-1-7.500-6-.500-2 1-3.500" fill="#fff" />
      </AppIcon>
    ),
  },
  {
    name: "Calculator",
    state: "running",
    icon: (
      <AppIcon>
        <rect x="4" width="23" height="30" rx="1" fill="#76808b" />
        <path d="M7 3h17v5H7z" fill="#47cdf4" />
        <path d="M7 10h5v5H7zM13 10h5v5h-5zM19 10h5v5h-5zM7 16h5v5H7zM13 16h5v5h-5zM7 22h5v5H7zM13 22h5v5h-5z" fill="#d3d7db" />
        <path d="M19 16h5v11h-5z" fill="#134a8a" />
      </AppIcon>
    ),
  },
  {
    name: "Chrome",
    state: "running",
    icon: (
      <AppIcon>
        <circle cx="16" cy="15" r="14" fill="#fdd043" />
        <path d="M16 15 4 8A14 14 0 0 0 15 29l6-9z" fill="#1ca15c" />
        <path d="M3.500 8.500A14 14 0 0 1 29 9H16l-6 9z" fill="#dc4d40" />
        <circle cx="16" cy="15" r="6.500" fill="#fff" />
        <circle cx="16" cy="15" r="5" fill="#4b8af4" />
      </AppIcon>
    ),
  },
  {
    name: "To Do",
    state: "running",
    icon: (
      <AppIcon>
        <path d="m4.500 14 3.500-3.500 9 9-4 4.500z" fill="#2567c4" />
        <path d="M12.500 23.500 9 20 23.500 5.500 27.500 9.500 14 23.500z" fill="#4da0ff" />
      </AppIcon>
    ),
  },
  {
    name: "Word",
    state: "active",
    icon: (
      <AppIcon>
        <path d="M8 1h22v7H8z" fill="#41a5ee" />
        <path d="M8 8h22v7H8z" fill="#2b7cd3" />
        <path d="M8 15h22v7H8z" fill="#185abd" />
        <path d="M8 22h22v6H8z" fill="#103f91" />
        <rect x="1" y="7" width="15" height="15" rx="1" fill="#185abd" />
        <text x="2.500" y="19" fontSize="12" fontWeight="700" fill="#fff">W</text>
      </AppIcon>
    ),
  },
  {
    name: "OneNote",
    state: "running",
    icon: (
      <AppIcon>
        <path d="M9 2h22v26H9z" fill="#ca64ea" />
        <path d="M24 7h7v7h-7z" fill="#ae4bd5" />
        <path d="M24 14h7v7h-7z" fill="#9332bf" />
        <path d="M24 21h7v7h-7z" fill="#7719aa" />
        <rect x="1" y="7" width="16" height="16" rx="1" fill="#7719aa" />
        <text x="4" y="20" fontSize="14" fontWeight="700" fill="#fff">N</text>
      </AppIcon>
    ),
  },
  {
    name: "Skype",
    state: "running",
    icon: (
      <AppIcon>
        <circle cx="11" cy="9" r="8" fill="#0a8fe0" />
        <circle cx="21" cy="20" r="8.500" fill="#0078d4" />
        <circle cx="16" cy="15" r="12.500" fill="#10a7ec" />
        <text x="10.500" y="22" fontSize="20" fontWeight="700" fill="#fff">S</text>
      </AppIcon>
    ),
  },
  {
    name: "Hangouts",
    state: "pinned",
    icon: (
      <AppIcon>
        <circle cx="16" cy="13" r="12" fill="#12887a" />
        <path d="M16 23h9l-9 6z" fill="#12887a" />
        <text x="8.500" y="18" fontSize="16" fontWeight="600" fill="#fff">@</text>
      </AppIcon>
    ),
  },
  {
    name: "Outlook",
    state: "running",
    icon: (
      <AppIcon>
        <path d="M9 1h20v15H9z" fill="#0f6cbd" />
        <path d="M16 6h7v7h-7z" fill="#28a8ea" />
        <path d="M23 6h6v7h-6z" fill="#50d9ff" />
        <path d="m8 15 11 7 11-7v13H8z" fill="#1490df" />
        <path d="M30 15 8 28h22z" fill="#35a8e8" />
        <rect x="1" y="7" width="15" height="15" rx="1" fill="#0f6cbd" />
        <text x="3.500" y="19" fontSize="13" fontWeight="700" fill="#fff">O</text>
      </AppIcon>
    ),
  },
  {
    name: "Nitro Pro",
    state: "running",
    icon: (
      <AppIcon>
        <path d="M1 0h30v30H1z" fill="#f04a1d" />
        <path d="M8 10.500q3-1 6-4-1 5 1 9 2 2 1 4-2 1-2 3l-1 3q-4-1-7 2.500Q6 17 8 10.500z" fill="#fff" />
        <path d="M16 3.500 17.500 2q4 1.500 8 1 0 10-2.500 13.500l-1.500 6q-2-2-5-2 3-3 1-8-3-4-1.500-9z" fill="#fff" />
      </AppIcon>
    ),
  },
];

function Taskbar() {
  return (
    <div className="flex h-[50px] shrink-0 items-stretch justify-between bg-[linear-gradient(90deg,#212427_0%,#26282a_24%,#393633_37%,#2b2b2b_50%,#2b2b2b_85%,#25272a_100%)] text-white">
      <div className="flex">
        <button type="button" aria-label="Start" className="flex w-[60px] items-center justify-center">
          <svg className="h-5 w-5" viewBox="0 0 20 20" fill="#fff">
            <path d="M0 3 8 2v7.500H0zM9 1.800 20 0v9.500H9zM0 10.500h8V18l-8-1zM9 10.500h11V20L9 18.200z" />
          </svg>
        </button>
        <button type="button" aria-label="Task View" className="mr-[3px] flex w-[60px] items-center justify-center">
          <svg className="h-5 w-5" viewBox="0 0 20 20" fill="none" stroke="#fff" strokeWidth={1.300}>
            <path d="M.5 0v3.500h13V0M.5 6h13v8H.500zM.5 20v-3.500h13V20M18.500 0v5M18.500 11v9" />
            <path d="M17 6h3v3h-3z" fill="#fff" stroke="none" />
          </svg>
        </button>
        {APPS.map((app) => (
          <button
            key={app.name}
            type="button"
            aria-label={app.name}
            className={`flex w-[62px] flex-col items-center pt-[10px] ${
              app.state === "active" ? "bg-[linear-gradient(90deg,#555555_56px,#2c2c2c_56px,#2c2c2c_57px,#444444_57px)]" : ""
            }`}
          >
            {app.icon}
            {app.state !== "pinned" && (
              <span
                className={`mt-[5px] h-[3px] bg-[#a5d8f5] ${app.state === "active" ? "w-[62px]" : "w-[51px]"} ${
                  app.state === "stacked" ? "border-r-[11px] border-[#7d9bae]" : ""
                }`}
              />
            )}
          </button>
        ))}
      </div>
      <div className="flex items-center">
        <button type="button" aria-label="Show hidden icons">
          <svg className="h-[10px] w-4" viewBox="0 0 16 10" fill="none" stroke="#fff" strokeWidth={1.400}>
            <path d="M.5 9 8 1.500 15.500 9" />
          </svg>
        </button>
        <svg className="ml-[15px] h-4 w-4" viewBox="0 0 16 16" fill="none" stroke="#ddd" strokeWidth={1.200}>
          <path d="M1 16Q1 1 15.500 1M5 16Q5 5 15.500 5M9 16q0-7 6.500-7" />
          <circle cx="14" cy="14" r="1.500" fill="#fff" stroke="none" />
        </svg>
        <svg className="ml-[10px] h-[18px] w-5" viewBox="0 0 20 18" fill="none" stroke="#fff" strokeWidth={1.200}>
          <path d="M1 6h3l4-4v14l-4-4H1zM10.500 6.500q2 2.500 0 5" />
          <path d="M13.500 4q4 5 0 10M16.500 1.500q5.500 7.500 0 15" stroke="#888" />
        </svg>
        <div className="mr-1 ml-[10px] w-[76px] text-center text-[14px] leading-[23px] whitespace-nowrap">
          <div>8:28 AM</div>
          <div>7/27/2020</div>
        </div>
        <span className="mr-[5px] h-full w-px bg-[#7a7a7a]" />
      </div>
    </div>
  );
}

export default function App() {
  return (
    <div className="flex h-screen flex-col overflow-hidden bg-[#f3f2f1] font-['Open_Sans','Noto_Sans',sans-serif] text-[#444444]">
      <TitleBar />
      <TabRow />
      <Ribbon />
      <main className="relative flex min-h-0 flex-1 justify-center bg-[#e6e6e6] pt-[22px] pr-[22px]">
        <div className="w-[1020px] border border-b-0 border-[#c6c6c6] bg-white" />
        <div className="absolute inset-x-0 top-[34px] flex justify-center">
          <CombineDialog />
        </div>
      </main>
      <StatusBar />
      <Taskbar />
    </div>
  );
}
